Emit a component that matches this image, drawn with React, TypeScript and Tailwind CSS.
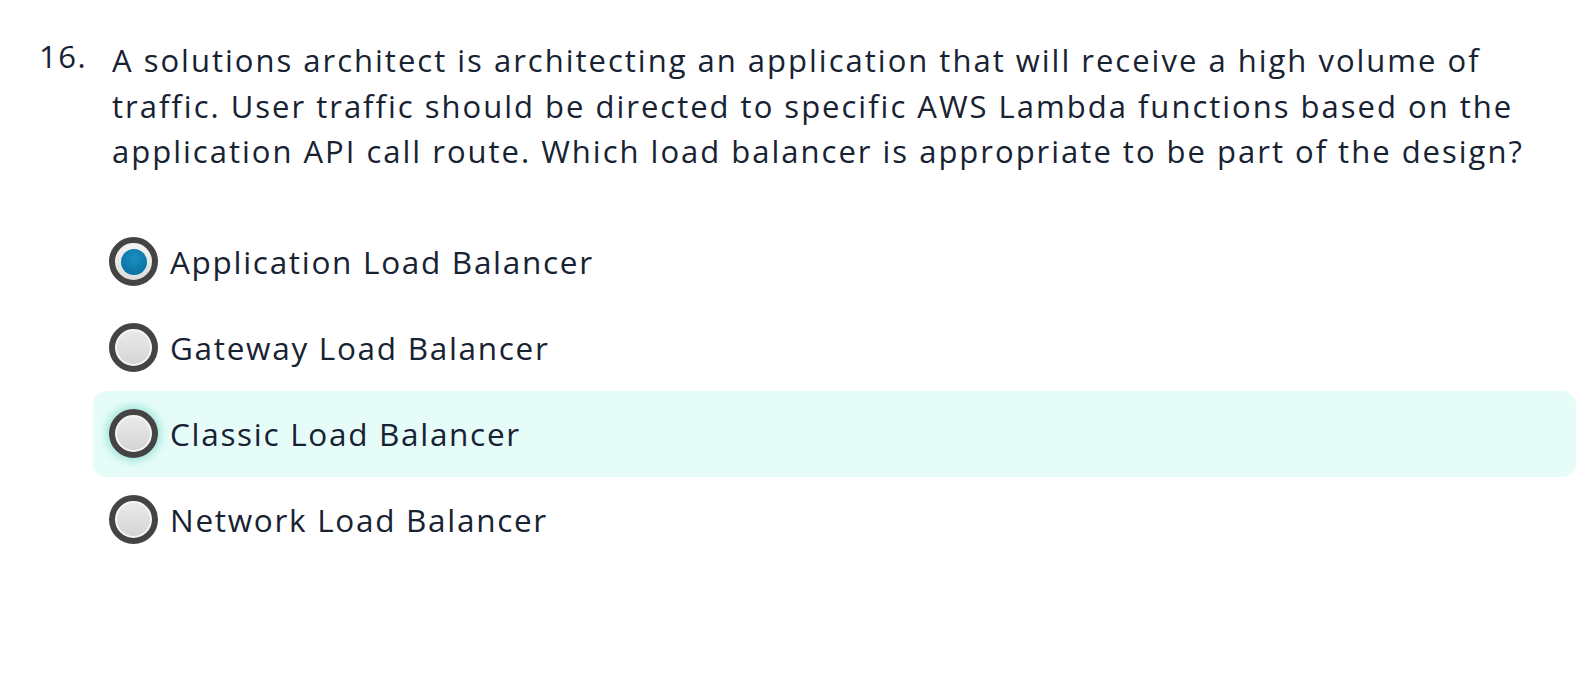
import React from "react";

const options = [
  { label: "Application Load Balancer", checked: true, hover: false },
  { label: "Gateway Load Balancer", checked: false, hover: false },
  { label: "Classic Load Balancer", checked: false, hover: true },
  { label: "Network Load Balancer", checked: false, hover: false },
];

function Radio({ checked, hover }: { checked: boolean; hover: boolean }) {
  return (
    <span
      className={
        "flex h-[49px] w-[49px] shrink-0 items-center justify-center rounded-full border-[6px] border-[#444444] " +
        (checked
          ? "bg-[linear-gradient(#f4f4f4,#dcdcdc)] "
          : "bg-[linear-gradient(#ebebeb,#d4d4d4)] ") +
        (hover
          ? "shadow-[0_0_8px_3px_#9fe5da,inset_0_0_0_2px_#f6f6f6]"
          : checked
          ? ""
          : "shadow-[inset_0_0_0_2px_#f6f6f6]")
      }
    >
      {checked && (
        <span className="h-[26px] w-[26px] rounded-full bg-[radial-gradient(circle_at_50%_35%,#1a8fc0,#006a9a)]" />
      )}
    </span>
  );
}

export default function App() {
  return (
    <div
      className="min-h-[678px] bg-white pl-[39px] pr-[15px] pt-[38px] text-[#172232]"
      style={{ fontFamily: '"Open Sans", "Noto Sans", sans-serif' }}
    >
      <div className="flex">
        <span className="w-[73px] shrink-0 -mt-[4px] text-[31px] leading-[45.5px] font-medium tracking-[1.5px]">
          16.
        </span>
        <p className="text-[31px] leading-[45.5px] font-medium tracking-[2px]">
          A solutions architect is architecting an application that will receive a high volume of
          <br />
          traffic. User traffic should be directed to specific AWS Lambda functions based on the
          <br />
          application API call route. Which load balancer is appropriate to be part of the design?
        </p>
      </div>
      <div className="ml-[54px] mt-[44px] flex flex-col">
        {options.map((o) => (
          <div
            key={o.label}
            className={
              "flex h-[86px] items-center gap-[12px] rounded-[14px] pl-[16px] " +
              (o.hover ? "bg-[#e6fcf8]" : "")
            }
          >
            <Radio checked={o.checked} hover={o.hover} />
            <span className="text-[31.5px] leading-none font-medium tracking-[1.7px]">{o.label}</span>
          </div>
        ))}
      </div>
    </div>
  );
}
